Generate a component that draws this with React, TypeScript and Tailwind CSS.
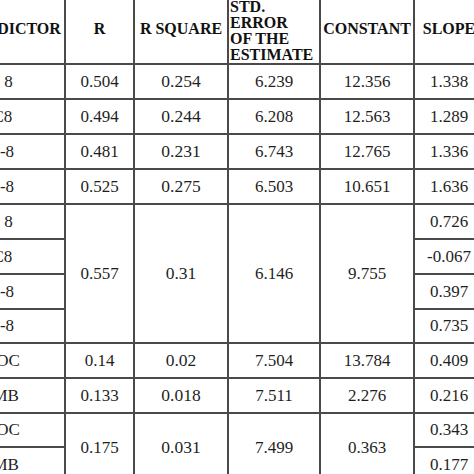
import React from 'react';

// One line of the regression summary
interface Fit {
  r: string;
  rSquare: string;
  stdError: string;
  constant: string;
}

interface Block {
  predictors: string[];
  slopes: string[];
  fit: Fit;
  heights: number[];
}

const blocks: Block[] = [
  { predictors: ['ENG 8'], slopes: ['1.338'], fit: { r: '0.504', rSquare: '0.254', stdError: '6.239', constant: '12.356' }, heights: [35] },
  { predictors: ['GMC8'], slopes: ['1.289'], fit: { r: '0.494', rSquare: '0.244', stdError: '6.208', constant: '12.563' }, heights: [35] },
  { predictors: ['ENG-8'], slopes: ['1.336'], fit: { r: '0.481', rSquare: '0.231', stdError: '6.743', constant: '12.765' }, heights: [35] },
  { predictors: ['GEO-8'], slopes: ['1.636'], fit: { r: '0.525', rSquare: '0.275', stdError: '6.503', constant: '10.651' }, heights: [35] },
  {
    predictors: ['ENG 8', 'GMC8', 'ENG-8', 'GEO-8'],
    slopes: ['0.726', '-0.067', '0.397', '0.735'],
    fit: { r: '0.557', rSquare: '0.31', stdError: '6.146', constant: '9.755' },
    heights: [35, 35, 35, 34],
  },
  { predictors: ['ASSOC'], slopes: ['0.409'], fit: { r: '0.14', rSquare: '0.02', stdError: '7.504', constant: '13.784' }, heights: [35] },
  { predictors: ['CLIMB'], slopes: ['0.216'], fit: { r: '0.133', rSquare: '0.018', stdError: '7.511', constant: '2.276' }, heights: [35] },
  {
    predictors: ['ASSOC', 'CLIMB'],
    slopes: ['0.343', '0.177'],
    fit: { r: '0.175', rSquare: '0.031', stdError: '7.499', constant: '0.363' },
    heights: [34, 35],
  },
];

const cell = 'border-2 border-[#4a4a4a] p-0 align-middle';
const head = `${cell} text-center text-[16px] font-bold text-[#111] leading-[16px] whitespace-nowrap`;
const num = `${cell} text-center text-[17px] text-[#1f1f1f]`;

const App = () => {
  return (
    <div className="w-[474px] h-[474px] overflow-hidden bg-white font-['Liberation_Serif',serif]">
      <table className="table-fixed border-collapse w-[523px] ml-[-40px] mt-[-7px]">
        <colgroup>
          <col className="w-[104px]" />
          <col className="w-[69px]" />
          <col className="w-[94px]" />
          <col className="w-[92px]" />
          <col className="w-[94px]" />
          <col className="w-[70px]" />
        </colgroup>
        <thead>
          <tr className="h-[70px]">
            <th className={head}>PREDICTOR</th>
            <th className={head}>R</th>
            <th className={head}>R SQUARE</th>
            <th className="border-2 border-[#4a4a4a] p-0 pl-[1px] align-bottom text-left text-[16px] font-bold text-[#111] leading-[16px] whitespace-nowrap">
              STD.
              <br />
              ERROR
              <br />
              OF THE
              <br />
              ESTIMATE
            </th>
            <th className={head}>CONSTANT</th>
            <th className={head}>SLOPE</th>
          </tr>
        </thead>
        <tbody>
          {blocks.map((block, bi) =>
            block.predictors.map((name, i) => (
              <tr key={`${bi}-${i}`} style={{ height: block.heights[i] }}>
                <td className={`${cell} text-left pl-[3px] text-[17px] text-[#1f1f1f] whitespace-nowrap`}>{name}</td>
                {i === 0 && (
                  <>
                    <td className={num} rowSpan={block.predictors.length}>{block.fit.r}</td>
                    <td className={`${cell} text-center text-[17.5px] text-[#1f1f1f]`} rowSpan={block.predictors.length}>
                      {block.fit.rSquare}
                    </td>
                    <td className={num} rowSpan={block.predictors.length}>{block.fit.stdError}</td>
                    <td className={num} rowSpan={block.predictors.length}>{block.fit.constant}</td>
                  </>
                )}
                <td className={num}>{block.slopes[i]}</td>
              </tr>
            ))
          )}
        </tbody>
      </table>
    </div>
  );
};

export default App;
